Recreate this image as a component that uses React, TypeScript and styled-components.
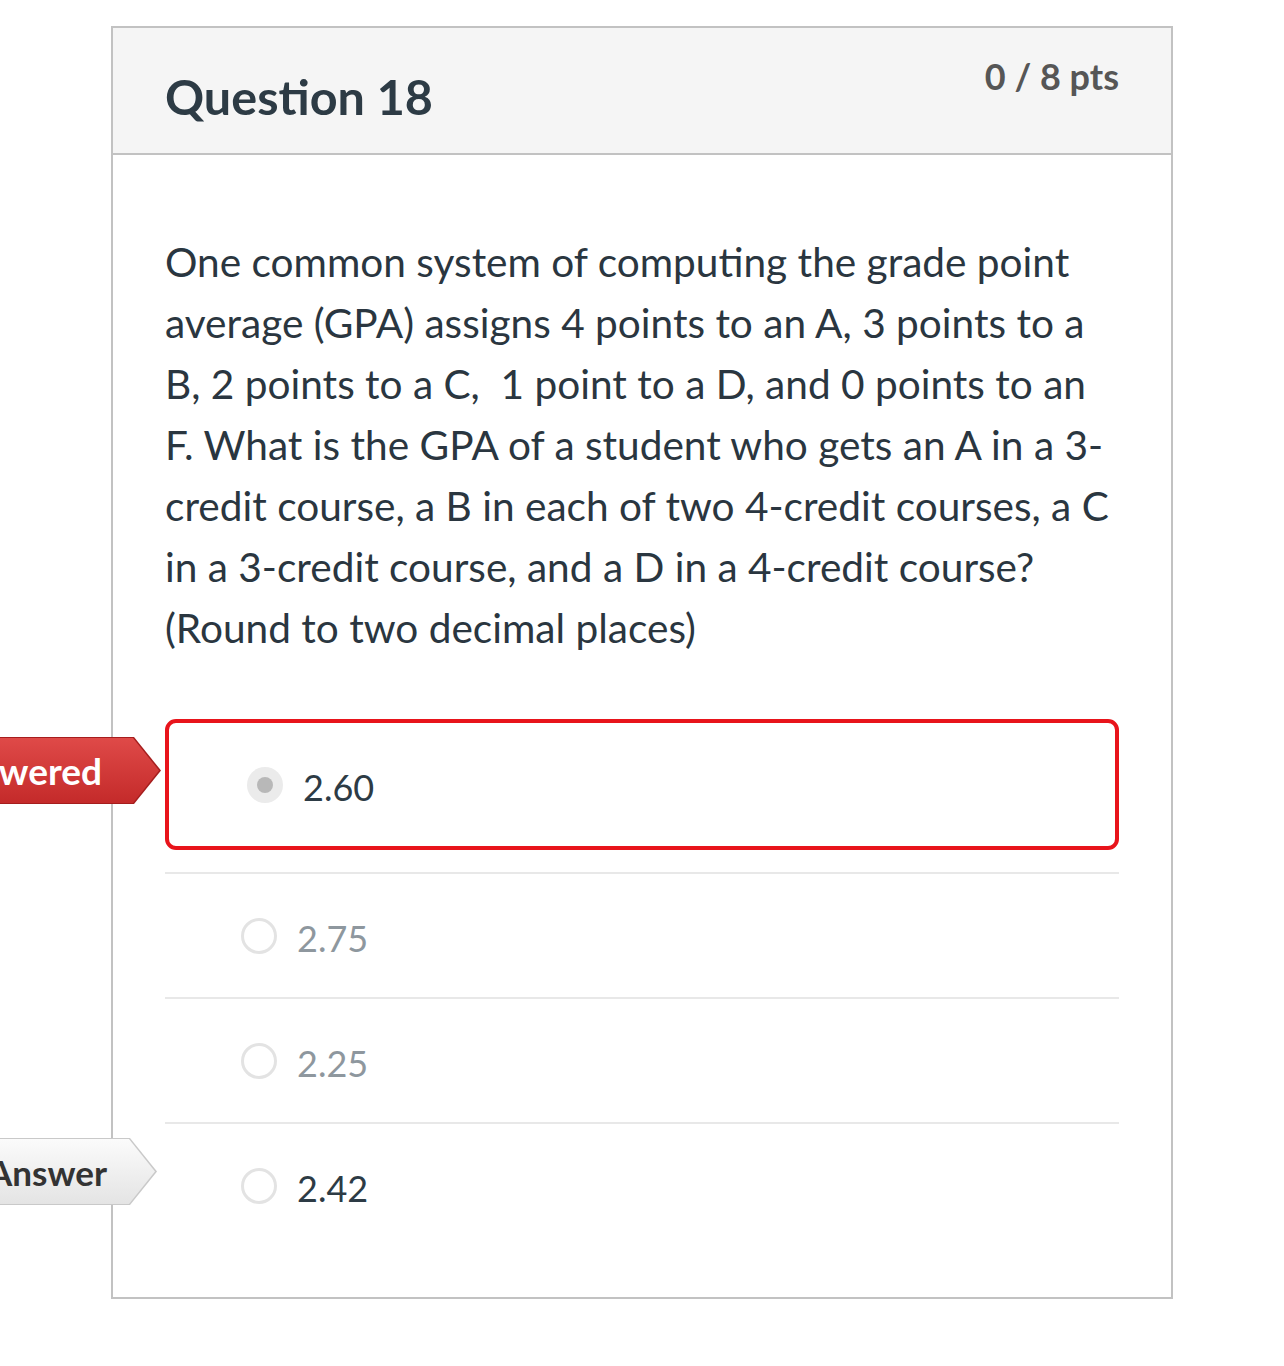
import React from "react";
import styled, { createGlobalStyle } from "styled-components";

const Global = createGlobalStyle`
  html, body { margin: 0; padding: 0; background: #ffffff; }
  body { font-family: Lato, "Open Sans", sans-serif; overflow: hidden; }
`;

const Page = styled.div`
  padding: 26px 0 40px 111px;
`;

const Card = styled.section`
  width: 1058px;
  border: 2px solid #c2c2c2;
  background: #fff;
`;

const Header = styled.header`
  background: #f5f5f5;
  border-bottom: 2px solid #c2c2c2;
  display: flex;
  justify-content: space-between;
  align-items: flex-start;
  padding: 0 52px;
  box-sizing: border-box;
  height: 127px;
`;

const Title = styled.h2`
  margin: 0;
  padding-top: 40px;
  font-size: 48.5px;
  line-height: 56px;
  font-weight: 700;
  color: #2d3b45;
`;

const Points = styled.div`
  padding-top: 26px;
  font-size: 36px;
  line-height: 44px;
  font-weight: 700;
  color: #565656;
`;

const Body = styled.div`
  padding: 76px 52px 50px 52px;
`;

const Question = styled.p`
  margin: 0 0 61px 0;
  font-size: 40.6px;
  line-height: 61px;
  color: #2a3640;
`;

const Answers = styled.div`
  display: flex;
  flex-direction: column;
`;

const Row = styled.div<{ $selected?: boolean }>`
  position: relative;
  display: flex;
  align-items: center;
  gap: 20px;
  box-sizing: border-box;
  ${(p) =>
    p.$selected
      ? `
    height: 131px;
    border: 4px solid #e8141b;
    border-radius: 11px;
    padding-left: 78px;
    margin-bottom: 22px;
  `
      : `
    height: 125px;
    border-top: 2px solid #e8e8e8;
    padding-left: 76px;
  `}
`;

const Radio = styled.span<{ $checked?: boolean }>`
  width: 36px;
  height: 36px;
  border-radius: 50%;
  box-sizing: border-box;
  flex: none;
  display: flex;
  align-items: center;
  justify-content: center;
  ${(p) =>
    p.$checked
      ? `background: #ebebeb;`
      : `border: 3px solid #e3e3e3; background: #fff;`}
`;

const Dot = styled.span`
  width: 16px;
  height: 16px;
  border-radius: 50%;
  background: #b8b8b8;
`;

const Label = styled.span<{ $muted?: boolean }>`
  font-size: 36px;
  line-height: 44px;
  color: ${(p) => (p.$muted ? "#8e979e" : "#2d3b45")};
  margin-top: 4px;
`;

const TagWrap = styled.div<{ $top: number }>`
  position: absolute;
  top: ${(p) => p.$top}px;
  right: calc(100% + 8px);
  width: 220px;
  height: 67px;
`;

const TagShape = styled.div<{ $kind: "wrong" | "correct" }>`
  position: absolute;
  inset: 0;
  clip-path: polygon(0 0, 193px 0, 220px 50%, 193px 100%, 0 100%);
  background: ${(p) => (p.$kind === "wrong" ? "#a51d1d" : "#c9c9c9")};
`;

const TagFill = styled.div<{ $kind: "wrong" | "correct" }>`
  position: absolute;
  inset: 1px 1px 1px 0;
  clip-path: polygon(0 0, 192px 0, 218px 50%, 192px 100%, 0 100%);
  background: ${(p) =>
    p.$kind === "wrong"
      ? "linear-gradient(#df4a48, #c42a2a)"
      : "linear-gradient(#fbfbfb, #e4e4e4)"};
  display: flex;
  align-items: center;
  justify-content: flex-end;
  padding-right: ${(p) => (p.$kind === "wrong" ? 58 : 49)}px;
  box-sizing: border-box;
  font-size: ${(p) => (p.$kind === "wrong" ? 37 : 35)}px;
  font-weight: 700;
  white-space: nowrap;
  color: ${(p) => (p.$kind === "wrong" ? "#ffffff" : "#333333")};
`;

const Tag = ({ kind, top, text }: { kind: "wrong" | "correct"; top: number; text: string }) => (
  <TagWrap $top={top}>
    <TagShape $kind={kind} />
    <TagFill $kind={kind}>{text}</TagFill>
  </TagWrap>
);

export default function App() {
  return (
    <Page>
      <Global />
      <Card>
        <Header>
          <Title>Question 18</Title>
          <Points>0 / 8 pts</Points>
        </Header>
        <Body>
          <Question>
            One common system of computing the grade point average (GPA) assigns 4 points to an A, 3 points to a
            B, 2 points to a C,&nbsp; 1 point to a D, and 0 points to an F. What is the GPA of a student who gets an A in a 3-credit
            course, a B in each of two 4-credit courses, a C in a 3-credit course, and a D in a 4-credit course? (Round to two
            decimal places)
          </Question>
          <Answers>
            <Row $selected>
              <Tag kind="wrong" top={14} text="You Answered" />
              <Radio $checked>
                <Dot />
              </Radio>
              <Label>2.60</Label>
            </Row>
            <Row>
              <Radio />
              <Label $muted>2.75</Label>
            </Row>
            <Row>
              <Radio />
              <Label $muted>2.25</Label>
            </Row>
            <Row>
              <Tag kind="correct" top={14} text="Correct Answer" />
              <Radio />
              <Label>2.42</Label>
            </Row>
          </Answers>
        </Body>
      </Card>
    </Page>
  );
}
